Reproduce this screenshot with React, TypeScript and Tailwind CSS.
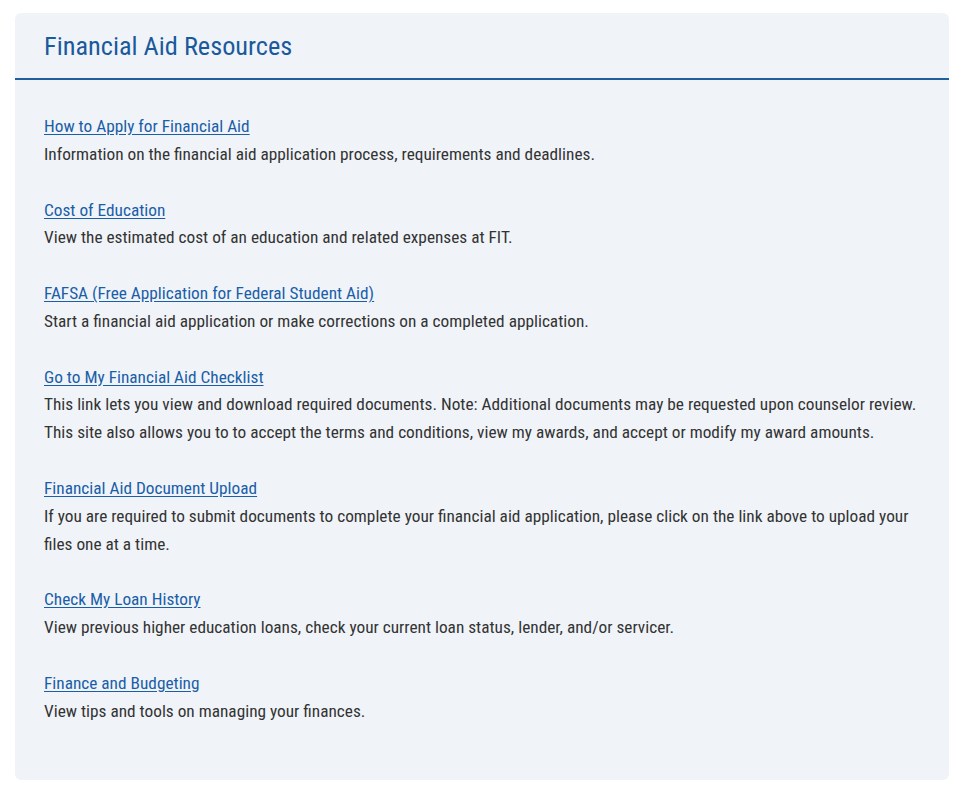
const items = [
  {
    title: "How to Apply for Financial Aid",
    desc: ["Information on the financial aid application process, requirements and deadlines."],
  },
  {
    title: "Cost of Education",
    desc: ["View the estimated cost of an education and related expenses at FIT."],
  },
  {
    title: "FAFSA (Free Application for Federal Student Aid)",
    desc: ["Start a financial aid application or make corrections on a completed application."],
  },
  {
    title: "Go to My Financial Aid Checklist",
    desc: [
      "This link lets you view and download required documents. Note: Additional documents may be requested upon counselor review.",
      "This site also allows you to to accept the terms and conditions, view my awards, and accept or modify my award amounts.",
    ],
  },
  {
    title: "Financial Aid Document Upload",
    desc: [
      "If you are required to submit documents to complete your financial aid application, please click on the link above to upload your files one at a time.",
    ],
  },
  {
    title: "Check My Loan History",
    desc: ["View previous higher education loans, check your current loan status, lender, and/or servicer."],
  },
  {
    title: "Finance and Budgeting",
    desc: ["View tips and tools on managing your finances."],
  },
];

export default function App() {
  return (
    <div className="h-[800px] overflow-hidden bg-white pt-[13px] pl-[15px] font-['Roboto_Condensed','Roboto',sans-serif]">
      <div className="flex w-[934px] flex-col rounded-md bg-[#f0f4f9] pb-[54px]">
        <div className="border-b-2 border-[#1f5f9e] px-[29px] pt-[17px] pb-[15px]">
          <h2 className="text-[26.3px] leading-[33px] text-[#1a5a9c]">Financial Aid Resources</h2>
        </div>
        <div className="flex flex-col gap-[27.85px] px-[29px] pt-[33px]">
          {items.map((it) => (
            <div key={it.title} className="text-[17.3px] leading-[27.85px]">
              <a href="#" className="text-[#1a5ea8] underline underline-offset-[1.5px]">
                {it.title}
              </a>
              <div className="w-[875px] text-[#333333]">
                {it.desc.map((d) => (
                  <div key={d}>{d}</div>
                ))}
              </div>
            </div>
          ))}
        </div>
      </div>
    </div>
  );
}
